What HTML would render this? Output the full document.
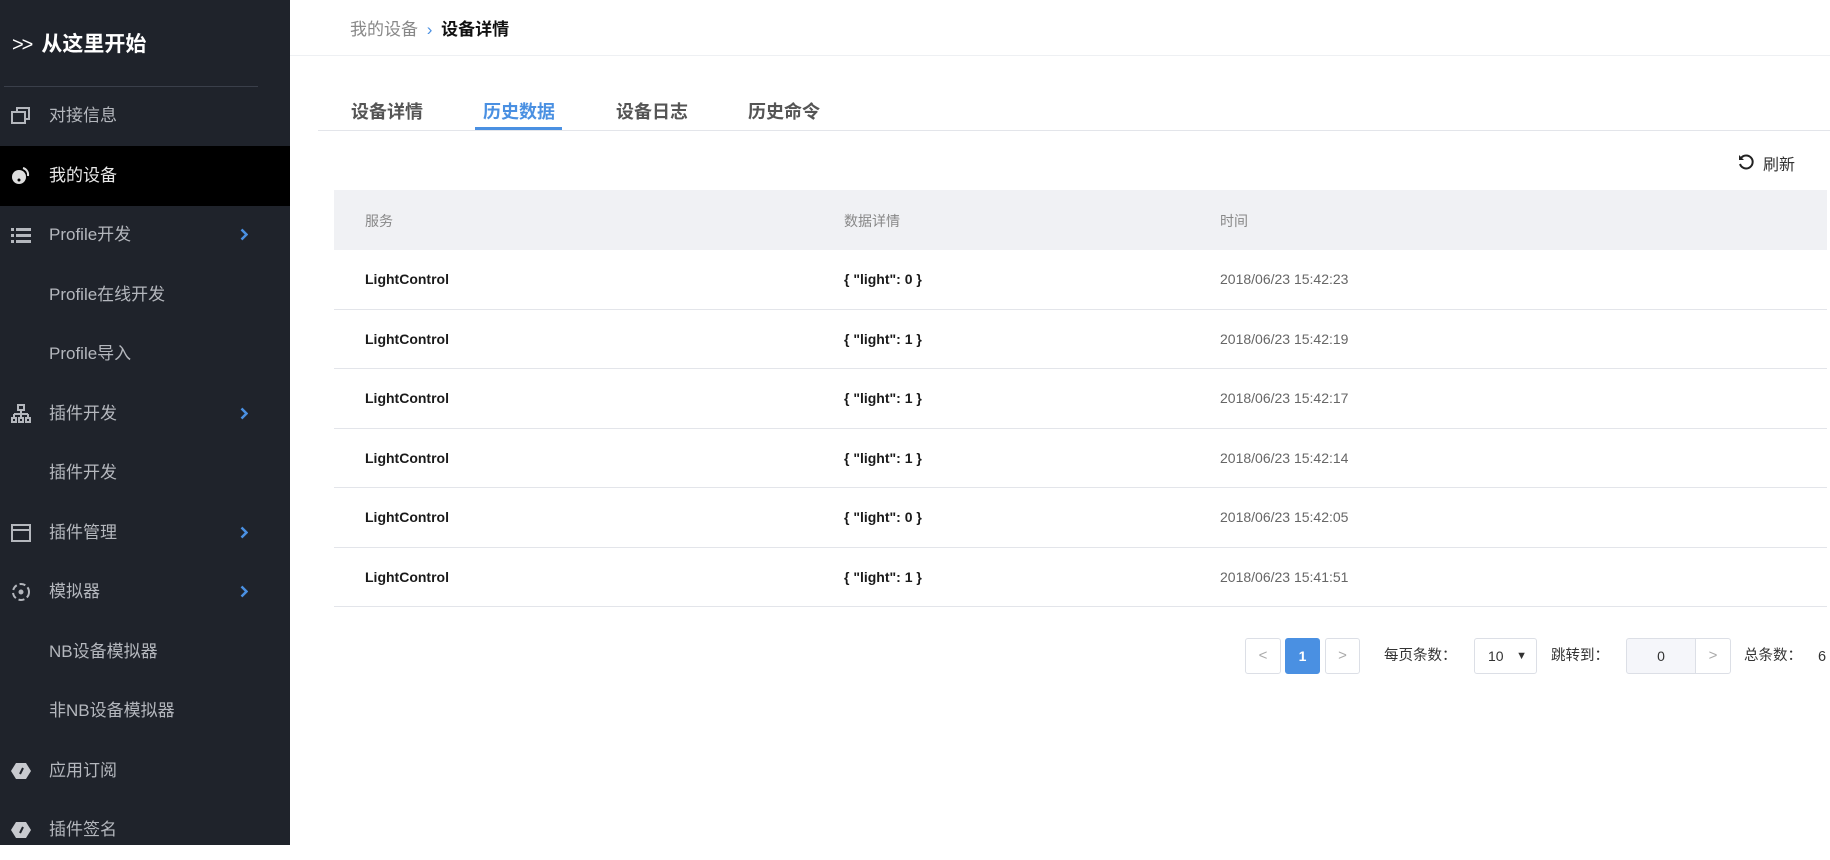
<!DOCTYPE html>
<html><head><meta charset="utf-8"><style>
*{margin:0;padding:0;box-sizing:border-box}
body{width:1830px;height:845px;overflow:hidden;background:#fff;font-family:"Liberation Sans","Noto Sans CJK SC",sans-serif;position:relative}
.side{position:absolute;left:0;top:0;width:290px;height:845px;background:#1f232b}
.title{position:absolute;left:12px;top:28px;color:#fff;font-size:21px;font-weight:bold}
.title span{font-size:20px;margin-right:10px;letter-spacing:-2px;font-weight:normal}
.div{position:absolute;left:4px;top:86px;width:254px;height:1px;background:#3a3f4a}
.item{position:absolute;left:0;width:290px;height:59.5px;color:#b4b7bd;font-size:17px;line-height:59.5px;padding-left:49px}
.item.act{background:#000;color:#e8e8e8}
.item svg.ic{position:absolute;left:11px;top:20px}
.arr{position:absolute;left:240px;top:23px}
.a{position:absolute;white-space:nowrap}
.row{position:absolute;left:334px;width:1493px;height:59.5px;border-bottom:1px solid #e3e5ea;font-size:14px}
.row span{position:absolute;top:0;line-height:59px}
.c1{left:31px;font-weight:bold;color:#1a1a1a}.c2{left:510px;font-weight:bold;color:#1a1a1a}.c3{left:886px;color:#666}
.pb{position:absolute;top:638px;height:36px;border:1px solid #dcdfe6;border-radius:3px;background:#fff;color:#aaa;text-align:center;line-height:34px;font-size:15px}
.lbl{position:absolute;top:646px;line-height:20px;height:20px;font-size:14.5px;color:#333;white-space:nowrap}
</style></head><body>
<div class="side">
<div class="title"><span>&gt;&gt;</span>从这里开始</div>
<div class="div"></div>
<div class="item" style="top:86px"><svg class="ic" width="20" height="20" viewBox="0 0 20 20" fill="none" stroke="#b4b7bd" stroke-width="2"><rect x="1" y="6" width="13" height="11"/><path d="M6 6V2h12v11h-4"/></svg>对接信息</div>
<div class="item act" style="top:146px"><svg class="ic" width="20" height="20" viewBox="0 0 20 20"><circle cx="8" cy="11" r="7" fill="#ddd"/><path d="M12 2a7 7 0 0 1 5 8" stroke="#ddd" stroke-width="2" fill="none"/><circle cx="8" cy="14" r="1.5" fill="#000"/></svg>我的设备</div>
<div class="item" style="top:205px"><svg class="ic" width="20" height="20" viewBox="0 0 20 20" fill="#b4b7bd"><rect x="0" y="3" width="3" height="3"/><rect x="5" y="3" width="15" height="3"/><rect x="0" y="9" width="3" height="3"/><rect x="5" y="9" width="15" height="3"/><rect x="0" y="15" width="3" height="3"/><rect x="5" y="15" width="15" height="3"/></svg>Profile开发<svg class="arr" width="8" height="13" viewBox="0 0 8 13" fill="none" stroke="#4a90e2" stroke-width="2.5"><path d="M1.5 1.5l5 5-5 5"/></svg></div>
<div class="item" style="top:265px">Profile在线开发</div>
<div class="item" style="top:324px">Profile导入</div>
<div class="item" style="top:384px"><svg class="ic" width="20" height="20" viewBox="0 0 20 20" fill="none" stroke="#b4b7bd" stroke-width="2"><rect x="7" y="1" width="6" height="5"/><path d="M10 6v4M3 10h14M3 10v4M10 10v4M17 10v4"/><rect x="1" y="14" width="4" height="4"/><rect x="8" y="14" width="4" height="4"/><rect x="15" y="14" width="4" height="4"/></svg>插件开发<svg class="arr" width="8" height="13" viewBox="0 0 8 13" fill="none" stroke="#4a90e2" stroke-width="2.5"><path d="M1.5 1.5l5 5-5 5"/></svg></div>
<div class="item" style="top:443px">插件开发</div>
<div class="item" style="top:503px"><svg class="ic" width="20" height="20" viewBox="0 0 20 20" fill="none" stroke="#b4b7bd" stroke-width="2"><rect x="1" y="2" width="18" height="16"/><path d="M1 7h18"/></svg>插件管理<svg class="arr" width="8" height="13" viewBox="0 0 8 13" fill="none" stroke="#4a90e2" stroke-width="2.5"><path d="M1.5 1.5l5 5-5 5"/></svg></div>
<div class="item" style="top:562px"><svg class="ic" width="20" height="20" viewBox="0 0 20 20" fill="none" stroke="#b4b7bd" stroke-width="2"><circle cx="10" cy="10" r="8" stroke-dasharray="6 3"/><circle cx="10" cy="10" r="1.5" fill="#b4b7bd"/></svg>模拟器<svg class="arr" width="8" height="13" viewBox="0 0 8 13" fill="none" stroke="#4a90e2" stroke-width="2.5"><path d="M1.5 1.5l5 5-5 5"/></svg></div>
<div class="item" style="top:622px">NB设备模拟器</div>
<div class="item" style="top:681px">非NB设备模拟器</div>
<div class="item" style="top:741px"><svg class="ic" width="20" height="20" viewBox="0 0 20 20"><path d="M5 2h10l5 8-5 8H5l-5-8z" fill="#c8cacf"/><path d="M9 13l3-6" stroke="#1f232b" stroke-width="2"/></svg>应用订阅</div>
<div class="item" style="top:800px"><svg class="ic" width="20" height="20" viewBox="0 0 20 20"><path d="M5 2h10l5 8-5 8H5l-5-8z" fill="#c8cacf"/><path d="M9 13l3-6" stroke="#1f232b" stroke-width="2"/></svg>插件签名</div>
</div>

<div class="a" style="left:350px;top:15px;font-size:17px;color:#888">我的设备 <span style="color:#4a90e2;margin:0 4px">›</span> <b style="color:#111">设备详情</b></div>
<div class="a" style="left:290px;top:55px;width:1540px;height:1px;background:#eef0f3"></div>

<div class="a" style="left:318px;top:130px;width:1512px;height:1px;background:#e3e5ea"></div>
<div class="a" style="left:351px;top:98px;font-size:18px;font-weight:bold;color:#555">设备详情</div>
<div class="a" style="left:483px;top:98px;font-size:18px;font-weight:bold;color:#4a90e2">历史数据</div>
<div class="a" style="left:475px;top:127px;width:87px;height:3px;background:#4a90e2"></div>
<div class="a" style="left:616px;top:98px;font-size:18px;font-weight:bold;color:#555">设备日志</div>
<div class="a" style="left:748px;top:98px;font-size:18px;font-weight:bold;color:#555">历史命令</div>

<svg class="a" style="left:1737px;top:153px" width="18" height="18" viewBox="0 0 18 18" fill="none" stroke="#222" stroke-width="2"><path d="M4 5a6.5 6.5 0 1 1-1 6"/><path d="M2 2v5h5" fill="#222" stroke="none"/></svg>
<div class="a" style="left:1763px;top:151px;font-size:16px;color:#333">刷新</div>

<div class="a" style="left:334px;top:190px;width:1493px;height:60px;background:#f0f1f4;font-size:14px;color:#888">
<span class="a" style="left:31px;top:21px">服务</span><span class="a" style="left:510px;top:21px">数据详情</span><span class="a" style="left:886px;top:21px">时间</span></div>
<div class="row" style="top:250px"><span class="c1">LightControl</span><span class="c2">{ "light": 0 }</span><span class="c3">2018/06/23 15:42:23</span></div>
<div class="row" style="top:309.5px"><span class="c1">LightControl</span><span class="c2">{ "light": 1 }</span><span class="c3">2018/06/23 15:42:19</span></div>
<div class="row" style="top:369px"><span class="c1">LightControl</span><span class="c2">{ "light": 1 }</span><span class="c3">2018/06/23 15:42:17</span></div>
<div class="row" style="top:428.5px"><span class="c1">LightControl</span><span class="c2">{ "light": 1 }</span><span class="c3">2018/06/23 15:42:14</span></div>
<div class="row" style="top:488px"><span class="c1">LightControl</span><span class="c2">{ "light": 0 }</span><span class="c3">2018/06/23 15:42:05</span></div>
<div class="row" style="top:547.5px"><span class="c1">LightControl</span><span class="c2">{ "light": 1 }</span><span class="c3">2018/06/23 15:41:51</span></div>

<div class="pb" style="left:1245px;width:36px">&lt;</div>
<div class="pb" style="left:1285px;width:35px;background:#4a90e2;border-color:#4a90e2;color:#fff;font-weight:bold;font-size:14px">1</div>
<div class="pb" style="left:1325px;width:35px">&gt;</div>
<div class="lbl" style="left:1384px">每页条数：</div>
<div class="pb" style="left:1474px;width:63px;color:#333;text-align:left;padding-left:13px;font-size:14px">10 <span style="position:absolute;right:9px;font-size:11px">▼</span></div>
<div class="lbl" style="left:1551px">跳转到：</div>
<div class="pb" style="left:1626px;width:70px;background:#f5f6fa;color:#333;border-radius:3px 0 0 3px;font-size:14px">0</div>
<div class="pb" style="left:1695px;width:36px;border-radius:0 3px 3px 0">&gt;</div>
<div class="lbl" style="left:1744px">总条数：</div>
<div class="lbl" style="left:1818px;top:647px">6</div>
</body></html>
